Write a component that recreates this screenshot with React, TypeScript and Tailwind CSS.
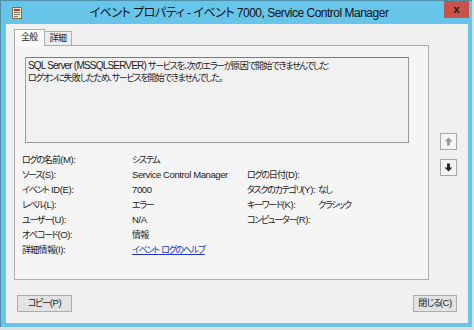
import React from 'react';

// Meiryo UI の仮名は狭いので、CJK 部分だけ詰めて描く
const CJK = /([\u3000-\u30ff\u4e00-\u9fff\uff00-\uffef]+)/;
const KANJI = /([\u4e00-\u9fff]+)/;

const T = ({ s }: { s: string }) => (
  <>
    {s.split(CJK).map((part, i) =>
      CJK.test(part) ? (
        <span key={i} className="text-[9px]">
          {part.split(KANJI).map((p, j) =>
            KANJI.test(p) ? (
              <span key={j} className="tracking-[-0.7px]">{p}</span>
            ) : (
              <span key={j} className="tracking-[-1.3px]">{p}</span>
            )
          )}
        </span>
      ) : (
        <span key={i}>{part}</span>
      )
    )}
  </>
);

const rowsLeft = [
  { label: 'ログの名前(M):', value: 'システム' },
  { label: 'ソース(S):', value: 'Service Control Manager' },
  { label: 'イベント ID(E):', value: '7000' },
  { label: 'レベル(L):', value: 'エラー' },
  { label: 'ユーザー(U):', value: 'N/A' },
  { label: 'オペコード(O):', value: '情報' },
];

const rowsRight: Record<number, { label: string; value: string }> = {
  1: { label: 'ログの日付(D):', value: '' },
  2: { label: 'タスクのカテゴリ(Y):', value: 'なし' },
  3: { label: 'キーワード(K):', value: 'クラシック' },
  4: { label: 'コンピューター(R):', value: '' },
};

const AppIcon = () => (
  <svg width="10" height="12" viewBox="0 0 10 12">
    <rect x="0.5" y="0.5" width="9" height="11" fill="#f3e7c4" stroke="#8a6d3b" />
    <rect x="2" y="2" width="6" height="2" fill="#c0392b" />
    <rect x="2" y="5" width="6" height="1" fill="#7a7a7a" />
    <rect x="2" y="7" width="6" height="1" fill="#7a7a7a" />
    <rect x="2" y="9" width="4" height="1" fill="#7a7a7a" />
  </svg>
);

const Arrow = ({ up, disabled }: { up?: boolean; disabled?: boolean }) => (
  <div className="w-[17px] h-[17px] border border-[#a8a8a8] bg-[#f4f4f4] flex items-center justify-center">
    <svg width="9" height="9" viewBox="0 0 9 9" className={up ? '' : 'rotate-180'}>
      <path d="M4.5 0.5 L8.5 4.5 L6 4.5 L6 8.5 L3 8.5 L3 4.5 L0.5 4.5 Z" fill={disabled ? '#9a9a9a' : '#2a2a2a'} />
    </svg>
  </div>
);

const App: React.FC = () => {
  return (
    <div className="w-[474px] h-[330px] bg-[#dedede] font-['Liberation_Sans','Noto_Sans_CJK_JP',sans-serif] text-[#1a1a1a] [font-feature-settings:'palt']">
      <div className="w-[472px] h-[327px] bg-[#67c5ea] border-l border-t border-[#4d8fa8] flex flex-col">
        {/* title bar */}
        <div className="h-[23px] flex items-center relative">
          <div className="pl-[11px] pt-[1px]"><AppIcon /></div>
          <div className="flex-1 text-center text-[12px] tracking-[-0.5px] pr-[16px] pt-[1px] text-[#111] whitespace-nowrap">
            イベント プロパティ - イベント 7000, Service Control Manager
          </div>
          <div className="absolute top-0 right-[3px] w-[25px] h-[17px] bg-[#c9534b] flex items-center justify-center">
            <span className="text-[#2b1414] text-[11px] font-bold leading-none">x</span>
          </div>
        </div>

        {/* client */}
        <div className="ml-[5px] mr-[4px] h-[299px] bg-[#f0f0f0] flex flex-col text-[9.5px] tracking-[-0.4px]">
          <div className="flex">
            <div className="pl-[8px] pt-[5px] w-[423px]">
              {/* tabs */}
              <div className="flex items-end h-[17px] relative z-10">
                <div className="h-[17px] px-[6px] bg-[#fbfbfb] border border-b-0 border-[#adadad] flex items-center"><T s="全般" /></div>
                <div className="h-[14px] px-[5px] bg-[#ececec] border border-b-0 border-l-0 border-[#adadad] flex items-center mb-[1px]"><T s="詳細" /></div>
              </div>
              {/* panel */}
              <div className="-mt-[1px] h-[235px] border border-[#adadad] bg-[#f5f5f5] pl-[10px] pr-[19px] pt-[11px]">
                <div className="h-[86px] border border-[#9a9a9a] border-t-[#7a7a7a] bg-[#f1f1f1] px-[2px] pt-[2px] leading-[11px] whitespace-nowrap text-[10px] tracking-[-0.8px]">
                  <div><T s="SQL Server (MSSQLSERVER) サービスを、次のエラーが原因で開始できませんでした:" /></div>
                  <div><T s="ログオンに失敗したため、サービスを開始できませんでした。" /></div>
                </div>
                <div className="mt-[10px] -ml-[3px] flex flex-col whitespace-nowrap">
                  {rowsLeft.map((r, i) => (
                    <div key={i} className="flex h-[15px] items-center">
                      <div className="w-[110px]"><T s={r.label} /></div>
                      <div className="w-[115px]"><T s={r.value} /></div>
                      {rowsRight[i] && (
                        <>
                          <div className="w-[71px]"><T s={rowsRight[i].label} /></div>
                          <div><T s={rowsRight[i].value} /></div>
                        </>
                      )}
                    </div>
                  ))}
                  <div className="flex h-[15px] items-center">
                    <div className="w-[110px]"><T s="詳細情報(I):" /></div>
                    <div className="text-[#1d35c9] underline"><T s="イベント ログのヘルプ" /></div>
                  </div>
                </div>
              </div>
            </div>
            <div className="flex-1 flex flex-col items-center pt-[109px] gap-[9px]">
              <Arrow up disabled />
              <Arrow />
            </div>
          </div>

          {/* buttons */}
          <div className="flex justify-between pl-[11px] pr-[11px] mt-[15px]">
            <div className="w-[55px] h-[17px] border border-[#acacac] bg-[#e3e3e3] flex items-center justify-center"><T s="コピー(P)" /></div>
            <div className="w-[44px] h-[17px] border border-[#acacac] bg-[#e3e3e3] flex items-center justify-center"><T s="閉じる(C)" /></div>
          </div>
        </div>
      </div>
    </div>
  );
};

export default App;
